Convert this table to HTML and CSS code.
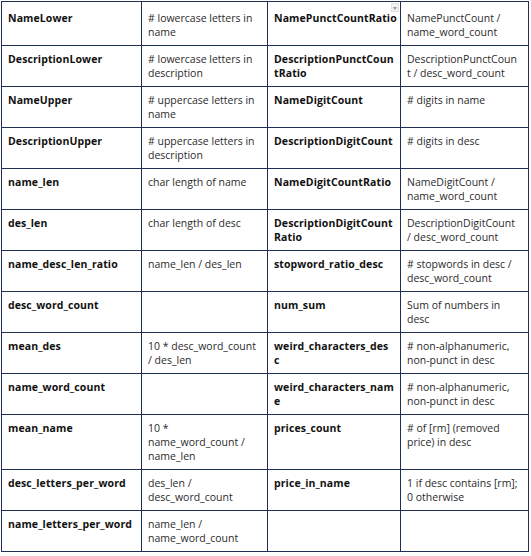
FILE: index.html
```html
<!DOCTYPE html>
<html>
<head>
<meta charset="utf-8">
<link rel="stylesheet" href="styles.css">
</head>
<body>
<table class="features">
<colgroup><col class="c1"><col class="c2"><col class="c3"><col class="c4"></colgroup>
<tbody>
<tr><th>NameLower</th><td># lowercase letters in name</td><th class="has-filter">NamePunctCountRatio<span class="filter"></span></th><td>NamePunctCount / name_word_count</td></tr>
<tr><th>DescriptionLower</th><td># lowercase letters in description</td><th>DescriptionPunctCountRatio</th><td>DescriptionPunctCount / desc_word_count</td></tr>
<tr><th>NameUpper</th><td># uppercase letters in name</td><th>NameDigitCount</th><td># digits in name</td></tr>
<tr><th>DescriptionUpper</th><td># uppercase letters in description</td><th>DescriptionDigitCount</th><td># digits in desc</td></tr>
<tr><th>name_len</th><td>char length of name</td><th>NameDigitCountRatio</th><td>NameDigitCount / name_word_count</td></tr>
<tr><th>des_len</th><td>char length of desc</td><th>DescriptionDigitCount Ratio</th><td>DescriptionDigitCount / desc_word_count</td></tr>
<tr><th>name_desc_len_ratio</th><td>name_len / des_len</td><th>stopword_ratio_desc</th><td># stopwords in desc / desc_word_count</td></tr>
<tr><th>desc_word_count</th><td></td><th>num_sum</th><td>Sum of numbers in desc</td></tr>
<tr><th>mean_des</th><td>10 * desc_word_count / des_len</td><th class="narrow">weird_characters_desc</th><td># non-alphanumeric, non-punct in desc</td></tr>
<tr><th>name_word_count</th><td></td><th>weird_characters_name</th><td># non-alphanumeric, non-punct in desc</td></tr>
<tr><th>mean_name</th><td>10 * name_word_count / name_len</td><th>prices_count</th><td># of [rm] (removed price) in desc</td></tr>
<tr><th>desc_letters_per_word</th><td>des_len / desc_word_count</td><th>price_in_name</th><td>1 if desc contains [rm]; 0 otherwise</td></tr>
<tr><th>name_letters_per_word</th><td>name_len / name_word_count</td><th></th><td></td></tr>
</tbody>
</table>
</body>
</html>
```
FILE: styles.css
```css
html, body {
  margin: 0;
  padding: 0;
  background: #ffffff;
}
body {
  padding: 1px 0 0 1px;
  font-family: "Open Sans", "Liberation Sans", sans-serif;
  font-size: 10.5px;
  line-height: 14px;
  color: #2b2b2b;
}
.features {
  border-collapse: collapse;
  table-layout: fixed;
  width: 527px;
}
.c1 { width: 140px; }
.c2 { width: 126px; }
.c3 { width: 133px; }
.c4 { width: 128px; }
.features th,
.features td {
  border: 1px solid #1d3053;
  padding: 6px 8px 6px 6px;
  height: 28px;
  vertical-align: top;
  text-align: left;
  overflow-wrap: anywhere;
}
.features th {
  font-weight: 700;
  color: #111111;
  padding-right: 6px;
  letter-spacing: 0.1px;
}
.features th.narrow {
  padding-right: 10px;
}
.features tr:first-child th,
.features tr:first-child td {
  padding-top: 9px;
}
.has-filter {
  position: relative;
  white-space: nowrap;
}
.filter {
  position: absolute;
  right: 1px;
  top: 1px;
  width: 8px;
  height: 9px;
  background: #f1f1f1;
  border: 1px solid #e2e2e2;
  box-sizing: border-box;
}
.filter::after {
  content: "";
  position: absolute;
  left: 1px;
  top: 3px;
  border-left: 2.5px solid transparent;
  border-right: 2.5px solid transparent;
  border-top: 3px solid #9a9a9a;
}
```
